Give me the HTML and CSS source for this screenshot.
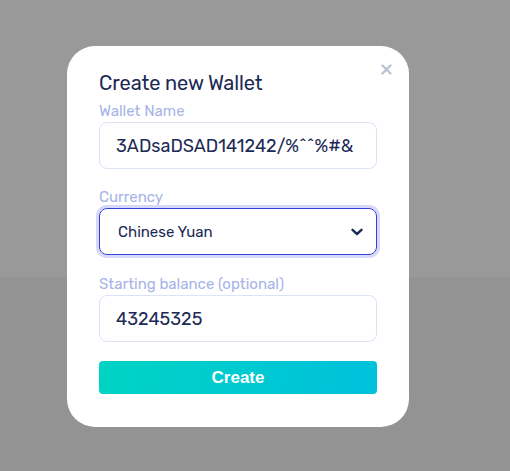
FILE: index.html
```html
<!DOCTYPE html>
<html>
<head>
<meta charset="utf-8">
<link rel="stylesheet" href="styles.css">
</head>
<body>
<div class="backdrop">
  <div class="band-top"></div>
  <div class="band-bottom"></div>
</div>
<div class="modal">
  <button class="close" aria-label="Close">
    <svg width="11" height="11" viewBox="0 0 11 11"><path d="M1.5 1.5 L9.5 9.5 M9.5 1.5 L1.5 9.5" stroke="#b6c1d2" stroke-width="2.2" stroke-linecap="round"/></svg>
  </button>
  <h2 class="title">Create new Wallet</h2>
  <label class="label">Wallet Name</label>
  <div class="field">3ADsaDSAD141242/%^^%#&amp;</div>
  <label class="label label-gap">Currency</label>
  <div class="field select">
    <span>Chinese Yuan</span>
    <svg class="chev" width="12" height="8" viewBox="0 0 12 8"><path d="M1.5 1.8 L6 6 L10.5 1.8" fill="none" stroke="#1d2b5a" stroke-width="2.4" stroke-linecap="round" stroke-linejoin="round"/></svg>
  </div>
  <label class="label label-gap label-last">Starting balance (optional)</label>
  <div class="field">43245325</div>
  <button class="create">Create</button>
</div>
</body>
</html>
```
FILE: styles.css
```css
html, body {
  margin: 0;
  padding: 0;
}
body {
  width: 510px;
  height: 471px;
  overflow: hidden;
  position: relative;
  font-family: "Rubik", "Inter", "Noto Sans", sans-serif;
}
.backdrop {
  display: flex;
  flex-direction: column;
  height: 471px;
}
.band-top {
  height: 277px;
  background: #999999;
}
.band-bottom {
  flex: 1;
  background: #939393;
}
.modal {
  position: absolute;
  left: 67px;
  top: 46px;
  width: 278px;
  padding: 23px 32px 33px;
  background: #ffffff;
  border-radius: 28px;
  display: flex;
  flex-direction: column;
}
.close {
  position: absolute;
  right: 17px;
  top: 18px;
  border: 0;
  background: transparent;
  padding: 0;
  width: 11px;
  height: 11px;
  display: flex;
}
.title {
  margin: 0;
  font-size: 20px;
  font-weight: 400;
  color: #1c2a55;
  line-height: 28px;
  letter-spacing: -0.1px;
}
.label {
  font-size: 15px;
  color: #a6b4e8;
  line-height: 21px;
  margin-top: 4px;
  margin-bottom: 0;
}
.label-gap {
  margin-top: 18px;
}
.label-last {
  margin-top: 19px;
}
.field {
  box-sizing: border-box;
  height: 47px;
  border: 1px solid #dbe3f9;
  border-radius: 8px;
  padding: 0 16px;
  display: flex;
  align-items: center;
  font-size: 18px;
  color: #1c2a55;
}
.select {
  border: 1.5px solid #3840d6;
  box-shadow: 0 0 0 3px #d6d9fa;
  padding: 0 13px 0 18px;
  justify-content: space-between;
  font-size: 15px;
}
.create {
  margin-top: 19px;
  height: 33px;
  border: 0;
  border-radius: 4px;
  background: linear-gradient(100deg, #00d4c4 0%, #00c0dc 100%);
  color: #ffffff;
  font-family: "Liberation Sans", Arial, sans-serif;
  font-weight: 700;
  font-size: 17px;
  padding: 0;
}
```
